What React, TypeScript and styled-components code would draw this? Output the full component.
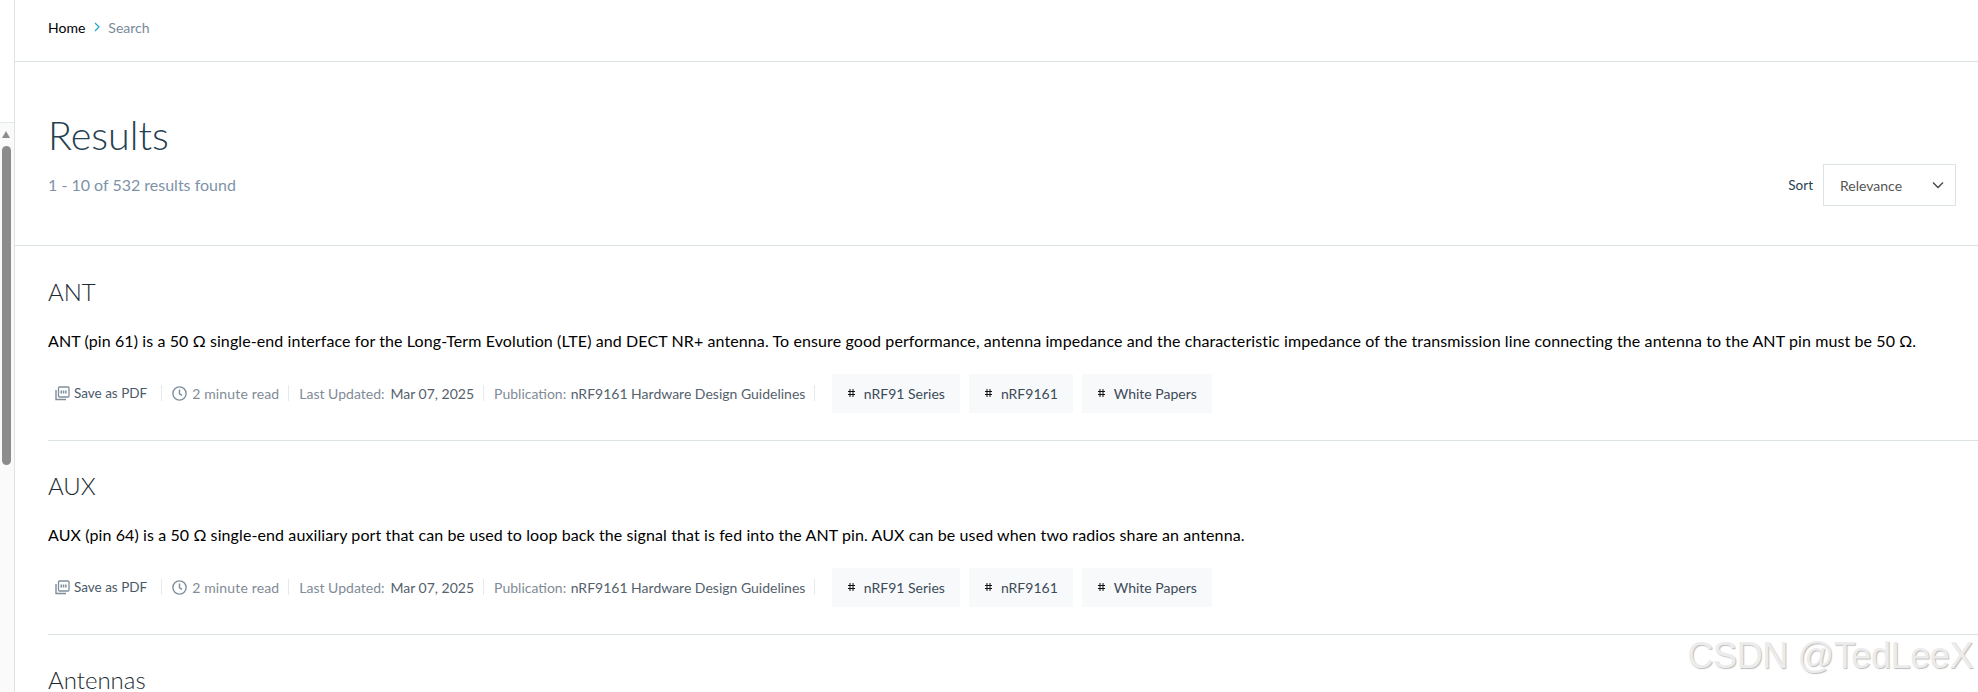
import styled, { createGlobalStyle } from 'styled-components'

const GlobalStyle = createGlobalStyle`
  html, body {
    margin: 0;
    height: 100%;
    overflow: hidden;
    background: #fff;
    font-family: Lato, "Liberation Sans", sans-serif;
  }
`

const Page = styled.div`
  position: relative;
  display: flex;
  height: 692px;
  overflow: hidden;
`

const Sidebar = styled.aside`
  flex: none;
  width: 14px;
  padding-top: 122px;
  border-right: 1px solid #dbe3e5;
  background: #fff;
`

const ScrollTrack = styled.div`
  height: 100%;
  box-sizing: border-box;
  padding: 8px 2px 0;
  border-top: 1px solid #e3e8ea;
  background: #fafafa;
`

const ScrollArrow = styled.div`
  width: 0;
  margin-bottom: 8px;
  border-left: 4.5px solid transparent;
  border-right: 4.5px solid transparent;
  border-bottom: 7px solid #8c8c8c;
`

const ScrollThumb = styled.div`
  width: 9px;
  height: 319px;
  border-radius: 5px;
  background: #8c8c8c;
`

const Main = styled.main`
  flex: 1;
  min-width: 0;
`

const Breadcrumb = styled.nav`
  display: flex;
  align-items: center;
  box-sizing: border-box;
  height: 62px;
  padding: 0 0 7px 33px;
  border-bottom: 1px solid #dbe3e5;
  font-size: 14px;
`

const Crumb = styled.span<{ $current?: boolean }>`
  color: ${p => (p.$current ? '#7a8a99' : '#000')};
`

const CrumbChevron = styled.svg`
  width: 8px;
  height: 10px;
  margin: 0 7px 0 8px;
  fill: none;
  stroke: #19a9cc;
  stroke-width: 1.2;
`

const Header = styled.header`
  display: flex;
  justify-content: space-between;
  align-items: flex-end;
  height: 184px;
  padding: 0 22px 0 33px;
  box-sizing: border-box;
  border-bottom: 1px solid #dbe3e5;
`

const HeaderText = styled.div`
  padding-bottom: 50px;
`

const Title = styled.h1`
  margin: 0 0 18px;
  font-size: 39.5px;
  line-height: 44px;
  font-weight: 300;
  color: #26404f;
`

const Count = styled.p`
  margin: 0;
  font-size: 16px;
  line-height: 20px;
  color: #7d92a8;
`

const SortBox = styled.div`
  display: flex;
  align-items: center;
  gap: 10px;
  padding-bottom: 39px;
`

const SortLabel = styled.span`
  font-size: 13.5px;
  color: #26404f;
`

const Select = styled.div`
  display: flex;
  justify-content: space-between;
  align-items: center;
  box-sizing: border-box;
  width: 133px;
  height: 42px;
  padding: 0 10px 0 16px;
  border: 1px solid #dbe3e5;
  font-size: 14px;
  color: #555;
`

const SelectChevron = styled.svg`
  width: 14px;
  height: 10px;
  fill: none;
  stroke: #444;
  stroke-width: 1.3;
`

const ResultList = styled.section`
  padding: 1px 0 0 33px;
`

const Result = styled.article`
  height: 194px;
  box-sizing: border-box;
  padding-top: 29px;
  border-bottom: 1px solid #dbe3e5;
`

const ResultTitle = styled.h2`
  margin: 0 0 21px;
  font-size: 24px;
  line-height: 32px;
  font-weight: 300;
  color: #1c2a33;
`

const ResultBody = styled.p`
  margin: 0 0 20px;
  font-size: 16px;
  line-height: 24px;
  letter-spacing: 0.1px;
  color: #000;
`

const MetaRow = styled.div`
  display: flex;
  align-items: center;
  height: 40px;
  padding-left: 7px;
  font-size: 14px;
  color: #7f8b96;
`

const MetaItem = styled.span<{ $wide?: boolean; $last?: boolean }>`
  display: flex;
  align-items: center;
  height: 16px;
  padding-right: ${p => (p.$wide ? 14 : 9)}px;
  margin-right: ${p => (p.$last ? 16.5 : 10)}px;
  border-right: 1px solid #e6eaec;
`

const MetaValue = styled.span<{ $tight?: boolean }>`
  margin-left: ${p => (p.$tight ? 4.5 : 6)}px;
  color: #55616c;
`

const SaveLink = styled.span`
  font-size: 13.5px;
  color: #4a5a68;
`

const ReadTime = styled.span`
  letter-spacing: 0.15px;
`

const MetaIcon = styled.svg<{ $gap: number }>`
  width: 15px;
  height: 15px;
  margin-right: ${p => p.$gap}px;
  fill: none;
  stroke: #7f8e9c;
`

const Tag = styled.span`
  display: flex;
  align-items: center;
  height: 39px;
  padding: 0 15px 0 16px;
  margin-right: 9px;
  background: #f8f9fb;
  color: #3c4b58;
`

const TagHash = styled.svg`
  width: 7px;
  height: 8px;
  margin-right: 9px;
  fill: none;
  stroke: #111;
  stroke-width: 1;
`

const Watermark = styled.div`
  position: absolute;
  right: 5px;
  bottom: 15px;
  font-family: "Liberation Sans", Arial, sans-serif;
  font-size: 36px;
  line-height: 42px;
  letter-spacing: -0.4px;
  color: #ececec;
  text-shadow: 1px 1px 1px #bdbdbd;
`

const tags = ['nRF91 Series', 'nRF9161', 'White Papers']

const results = [
  {
    title: 'ANT',
    body: 'ANT (pin 61) is a 50 Ω single-end interface for the Long-Term Evolution (LTE) and DECT NR+ antenna. To ensure good performance, antenna impedance and the characteristic impedance of the transmission line connecting the antenna to the ANT pin must be 50 Ω.',
  },
  {
    title: 'AUX',
    body: 'AUX (pin 64) is a 50 Ω single-end auxiliary port that can be used to loop back the signal that is fed into the ANT pin. AUX can be used when two radios share an antenna.',
  },
]

const PdfIcon = () => (
  <MetaIcon $gap={4} viewBox="0 0 15 15">
    <path d="M1 4v9.5h10" strokeWidth="1.4" />
    <rect x="3.5" y="1" width="10.5" height="10" rx="1" strokeWidth="1.3" />
    <path d="M5.5 6h6.5" strokeWidth="3" strokeDasharray="1.5 0.8" />
  </MetaIcon>
)

const ClockIcon = () => (
  <MetaIcon $gap={5} viewBox="0 0 15 15">
    <circle cx="7.5" cy="7.5" r="6.6" strokeWidth="1.4" />
    <path d="M7.5 3.6v4.2l2.6 1.6" strokeWidth="1.4" />
  </MetaIcon>
)

const App = () => {
  return (
    <Page>
      <GlobalStyle />
      <Sidebar>
        <ScrollTrack>
          <ScrollArrow />
          <ScrollThumb />
        </ScrollTrack>
      </Sidebar>
      <Main>
        <Breadcrumb>
          <Crumb>Home</Crumb>
          <CrumbChevron viewBox="0 0 8 10">
            <path d="M2 1l4 4-4 4" />
          </CrumbChevron>
          <Crumb $current>Search</Crumb>
        </Breadcrumb>
        <Header>
          <HeaderText>
            <Title>Results</Title>
            <Count>1 - 10 of 532 results found</Count>
          </HeaderText>
          <SortBox>
            <SortLabel>Sort</SortLabel>
            <Select>
              Relevance
              <SelectChevron viewBox="0 0 14 10">
                <path d="M2 2.5l5 5 5-5" />
              </SelectChevron>
            </Select>
          </SortBox>
        </Header>
        <ResultList>
          {results.map(r => (
            <Result key={r.title}>
              <ResultTitle>{r.title}</ResultTitle>
              <ResultBody>{r.body}</ResultBody>
              <MetaRow>
                <MetaItem $wide>
                  <PdfIcon />
                  <SaveLink>Save as PDF</SaveLink>
                </MetaItem>
                <MetaItem>
                  <ClockIcon />
                  <ReadTime>2 minute read</ReadTime>
                </MetaItem>
                <MetaItem>
                  Last Updated:<MetaValue>Mar 07, 2025</MetaValue>
                </MetaItem>
                <MetaItem $last>
                  Publication:<MetaValue $tight>nRF9161 Hardware Design Guidelines</MetaValue>
                </MetaItem>
                {tags.map(t => (
                  <Tag key={t}>
                    <TagHash viewBox="0 0 7 8">
                      <path d="M2 0v8M5 0v8M0 2.5h7M0 5.5h7" />
                    </TagHash>
                    {t}
                  </Tag>
                ))}
              </MetaRow>
            </Result>
          ))}
          <Result>
            <ResultTitle>Antennas</ResultTitle>
          </Result>
        </ResultList>
      </Main>
      <Watermark>CSDN @TedLeeX</Watermark>
    </Page>
  )
}

export default App
